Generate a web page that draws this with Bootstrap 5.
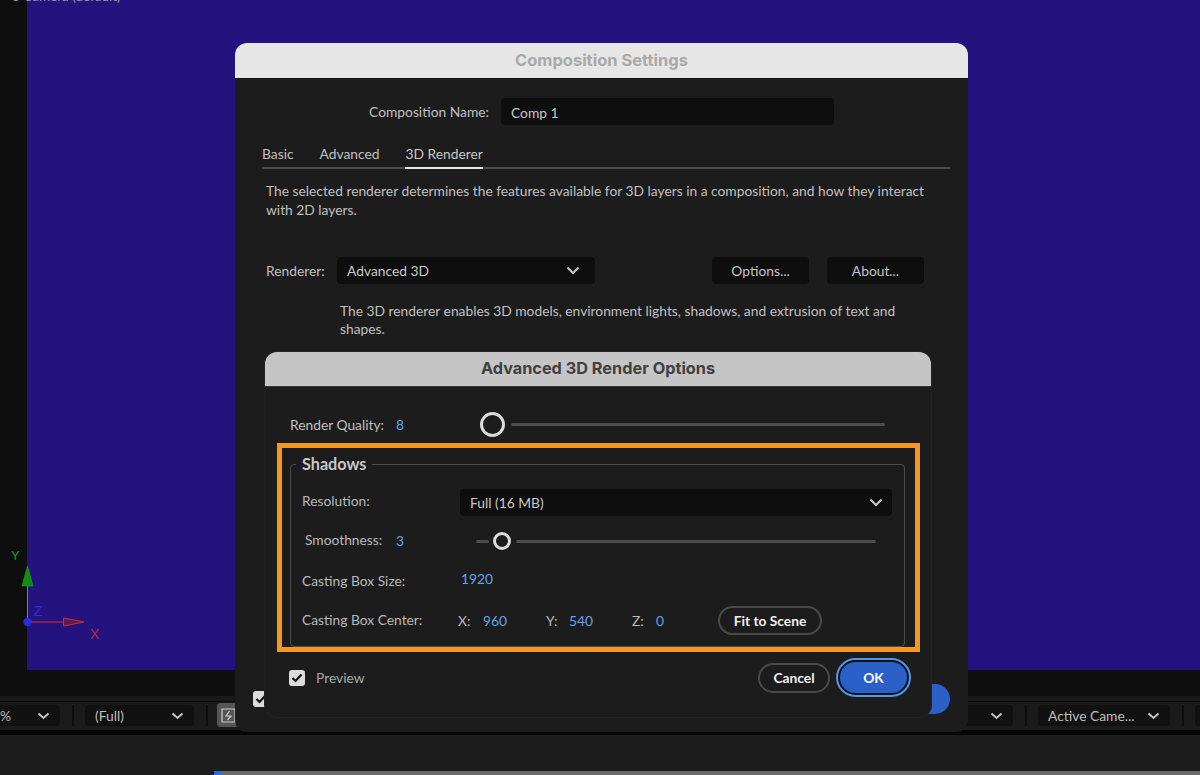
<!DOCTYPE html>
<html lang="en">
<head>
<meta charset="utf-8">
<title>Advanced 3D Render Options</title>
<link href="https://cdn.jsdelivr.net/npm/bootstrap@5.3.0/dist/css/bootstrap.min.css" rel="stylesheet">
<script src="https://cdn.jsdelivr.net/npm/bootstrap@5.3.0/dist/js/bootstrap.bundle.min.js"></script>
<style>
html,body{height:775px;overflow:hidden}
body{background:#0e0e0e;color:#c0c0c0;font-family:"Lato","Noto Sans",sans-serif;font-size:13.8px;line-height:19px;position:relative}
.shell{width:1200px;height:775px}
.viewer{height:670px}
.gutter{width:27px;background:#0e0e0e}
.stage{background:#24137e}
.strip-a{height:26px;background:#0e0e0e}
.strip-b{height:5px;background:#1a1a1a;border-bottom:1px solid #0a0a0a;box-sizing:content-box}
.toolbar{height:28px;background:#1b1b1b;color:#bdbdbd;padding-top:3px}
.strip-c{height:5px;background:#050505}
.panel-low{height:36px;background:#1c1c1c}
.timeline{height:4px;background:#1c1c1c}
.tl-blue{width:7px;margin-left:214px;background:#2a6ae0}
.tl-gray{background:#6a6a6a}
.tb-sel{height:21px;background:#111;border-radius:4px;padding:0 10px;font-size:13.8px}
.tb-pct{width:60px;border-radius:0 4px 4px 0;padding-left:0}
.tb-full{width:109px;margin-left:11px}
.tb-a{width:103px;margin-left:auto}
.tb-b{width:132px;margin-left:11px}
.tb-c{width:5px;margin-left:11px;padding:0;border-radius:4px 0 0 4px}
.tb-div{width:2px;height:21px;background:#0e0e0e;margin-left:12px}
.tb-ico{width:23px;height:24px;background:#555;border-radius:4px;margin-left:9px;margin-top:-2px}
.win{position:absolute;background:#1c1c1c;border-radius:12px;display:flex;flex-direction:column}
.win-comp{left:235px;top:43px;width:733px;height:689px}
.win-adv{left:265px;top:352px;width:666px;height:365px;box-shadow:0 0 0 1px #232323}
.win-title{font-family:"Inter","Liberation Sans",sans-serif;font-weight:700;text-align:center;border-radius:12px 12px 0 0;flex:none}
.win-comp .win-title{height:36px;line-height:34px;background:#e6e6e6;color:#a9a9a9;font-size:16.5px;border-bottom:1px solid #0c0c0c}
.win-adv .win-title{height:35px;line-height:33px;background:#c5c5c5;color:#404040;font-size:16.3px;border-bottom:1px solid #333}
.name-row{height:27px;margin-top:19px}
.name-lab{width:254px;text-align:right;margin-right:12px}
.well{background:#0e0e0e;border-radius:4px;color:#c8c8c8}
.name-in{width:333px;height:27px;padding-left:10px;line-height:29px}
.tabs-row{margin:14px 18px 0 27px;border-bottom:2px solid #4c4c4c;gap:26px;box-sizing:content-box;height:28px;flex-wrap:nowrap}
.tabs-row .nav-link{padding:0;color:#c0c0c0;height:30px;line-height:30px;border-bottom:2px solid transparent}
.tabs-row .nav-link.active{color:#c8c8c8;border-bottom-color:#e8e8e8}
.intro{margin:12px 0 0 31px;width:665px;line-height:19px}
.rend-row{margin:38px 0 0 31px;height:27px}
.rend-lab{width:71px}
.rend-sel{width:258px;height:27px;padding:0 15px 0 10px}
.opt-btn{width:97px;height:27px;padding:0;background:#0e0e0e;border:0;border-radius:4px;color:#c4c4c4;font-size:13.8px;line-height:27px}
.opt-first{margin-left:117px}
.opt-next{margin-left:18px}
.desc{margin:18px 0 0 105px;width:570px;line-height:18px}
.comp-foot{margin-top:auto;padding:0 18px 18px}
.chk{width:16px;height:16px;background:#dcdcdc;border-radius:3px;flex:none}
.ghost-blue{width:70px;height:30px;background:#2a60c8;border-radius:15px;border:0;padding:0}
.quality{margin:27px 0 0 25px;height:20px}
.lab-q{width:106px}
.val{color:#62a3ee}
.val-q{width:84px}
.knob{border:3px solid #dcdcdc;border-radius:50%;flex:none;display:block}
.knob-l{width:25px;height:25px;margin-right:6px}
.knob-s{width:18px;height:18px;margin:0 5px 0 4px}
.track{height:3px;background:#4c4c4c;border-radius:2px;display:block}
.track-q{width:374px}
.track-a{width:13px}
.track-b{width:360px}
.orange{margin:9px 0 0 12px;width:643px;height:209px;border:5px solid #f39821;padding:16px 10px 0 8px}
.field{height:183px;border:1px solid #4c4c4c;border-radius:4px;position:relative;padding:24px 12px 0 11px;color:#b9b9b9}
.legend-txt{position:absolute;left:5px;top:-12px;background:#1c1c1c;padding:0 6px;font-weight:700;font-size:16.2px;color:#c8c8c8;line-height:22px}
.res-row{height:27px}
.lab-r{width:158px;margin-top:-4px}
.lab-w{width:159px}
.lab-c{width:156px;margin-top:-2px}
.res-sel{width:432px;height:27px;padding:0 9px 0 10px}
.smo-row{height:20px;margin-top:15px;padding-left:3px}
.lab-sm{width:91px;margin-top:-3px}
.val-sm{width:80px;margin-top:-1px}
.size-row{margin-top:19px;height:20px}
.size-val{margin-top:-3px}
.center-row{height:30px;margin-top:15px}
.ax-x{width:25px}.v-x{width:63px}.ax-y{width:23px}.v-y{width:63px}.ax-z{width:24px}.v-z{width:62px}
.btn-line{border:2px solid #4a4a4a;background:transparent;color:#f0f0f0;font-weight:700;border-radius:15px;padding:0;font-size:13.8px;line-height:25px}
.btn-fit{width:104px;height:29px}
.adv-foot{margin-top:6px;height:39px;padding:0 20px 0 24px}
.prev-lab{margin-left:11px;color:#a8a8a8}
.btn-cancel{width:72px;height:30px;margin-left:auto}
.ok-ring{width:75px;height:39px;margin-left:6px;border:2px solid #4f97ec;border-radius:20px;padding:2px;background:#111}
.btn-ok{width:100%;height:100%;border:0;border-radius:16px;background:#2a60c8;color:#fff;font-weight:700;font-size:13.8px;padding:0;line-height:29px}
.top-clip{position:absolute;left:12px;top:-12px;font-size:13.5px;color:#9a9a9a;line-height:16px}
.gizmo{position:absolute;left:0;top:540px}
</style>
</head>
<body>
<div class="shell d-flex flex-column">
  <div class="viewer d-flex">
    <div class="gutter"></div>
    <div class="stage flex-grow-1"></div>
  </div>
  <div class="strip-a"></div>
  <div class="strip-b"></div>
  <div class="toolbar d-flex">
    <div class="tb-sel tb-pct d-flex align-items-center justify-content-between"><span>%</span><svg width="13" height="8" viewBox="0 0 13 8"><path d="M1.500 1.500 6.500 6 11.500 1.500" fill="none" stroke="#c4c4c4" stroke-width="2"/></svg></div>
    <div class="tb-div"></div>
    <div class="tb-sel tb-full d-flex align-items-center justify-content-between"><span>(Full)</span><svg width="13" height="8" viewBox="0 0 13 8"><path d="M1.500 1.500 6.500 6 11.500 1.500" fill="none" stroke="#c4c4c4" stroke-width="2"/></svg></div>
    <div class="tb-div"></div>
    <div class="tb-ico d-flex align-items-center justify-content-center"><svg width="15" height="15" viewBox="0 0 15 15"><path d="M1 1H14V14H1Z M8.500 3 5 8H10L6.500 12" fill="none" stroke="#ccc" stroke-width="1.200"/></svg></div>
    <div class="tb-sel tb-a d-flex align-items-center justify-content-end"><svg width="13" height="8" viewBox="0 0 13 8"><path d="M1.500 1.500 6.500 6 11.500 1.500" fill="none" stroke="#c4c4c4" stroke-width="2"/></svg></div>
    <div class="tb-div"></div>
    <div class="tb-sel tb-b d-flex align-items-center justify-content-between"><span>Active Came...</span><svg width="13" height="8" viewBox="0 0 13 8"><path d="M1.500 1.500 6.500 6 11.500 1.500" fill="none" stroke="#c4c4c4" stroke-width="2"/></svg></div>
    <div class="tb-div"></div>
    <div class="tb-sel tb-c"></div>
  </div>
  <div class="strip-c"></div>
  <div class="panel-low"></div>
  <div class="timeline d-flex"><div class="tl-blue"></div><div class="tl-gray flex-grow-1"></div></div>
</div>

<div class="top-clip">3 Camera (default)</div>

<svg class="gizmo" width="115" height="115" viewBox="0 540 115 115">
  <text x="11" y="560" font-family="Liberation Sans,sans-serif" font-size="13" fill="#12a012">Y</text>
  <path d="M27.500 586V620" stroke="#2fb52f" stroke-width="1"/>
  <path d="M27.500 566 33 586H22Z" fill="#0e8f0e" stroke="#18a818" stroke-width=".6"/>
  <text x="33.500" y="616" font-family="Liberation Sans,sans-serif" font-size="15" fill="#2f2fd0">Z</text>
  <path d="M30 622H64" stroke="#e02a2a" stroke-width="1.200"/>
  <path d="M63.500 618V626L84 622Z" fill="#5a1a50" stroke="#d62a2a" stroke-width="1"/>
  <circle cx="27.500" cy="622" r="4.200" fill="#2a2ae0"/>
  <text x="90" y="639" font-family="Liberation Sans,sans-serif" font-size="14" fill="#b82a40">X</text>
</svg>

<section class="win win-comp">
  <div class="win-title">Composition Settings</div>
  <div class="name-row d-flex align-items-center">
    <div class="name-lab">Composition Name:</div>
    <div class="well name-in">Comp 1</div>
  </div>
  <nav class="nav tabs-row">
    <a class="nav-link" href="#">Basic</a>
    <a class="nav-link" href="#">Advanced</a>
    <a class="nav-link active" href="#">3D Renderer</a>
  </nav>
  <p class="intro mb-0">The selected renderer determines the features available for 3D layers in a composition, and how they interact with 2D layers.</p>
  <div class="rend-row d-flex align-items-center">
    <div class="rend-lab">Renderer:</div>
    <div class="well rend-sel d-flex align-items-center justify-content-between"><span>Advanced 3D</span><svg width="14" height="9" viewBox="0 0 14 9"><path d="M1.500 1.500 7 7 12.500 1.500" fill="none" stroke="#c8c8c8" stroke-width="2"/></svg></div>
    <button class="btn opt-btn opt-first">Options...</button>
    <button class="btn opt-btn opt-next">About...</button>
  </div>
  <p class="desc mb-0">The 3D renderer enables 3D models, environment lights, shadows, and extrusion of text and shapes.</p>
  <div class="comp-foot d-flex align-items-center justify-content-between">
    <span class="chk d-flex align-items-center justify-content-center"><svg width="12" height="10" viewBox="0 0 12 10"><path d="M1.500 5 4.500 8 10.500 1.500" fill="none" stroke="#111" stroke-width="2.200"/></svg></span>
    <button class="btn ghost-blue" aria-label="OK"></button>
  </div>
</section>

<section class="win win-adv">
  <div class="win-title">Advanced 3D Render Options</div>
  <div class="quality d-flex align-items-center">
    <div class="lab-q">Render Quality:</div>
    <div class="val val-q">8</div>
    <span class="knob knob-l"></span>
    <span class="track track-q"></span>
  </div>
  <div class="orange">
    <div class="field">
      <div class="legend-txt">Shadows</div>
      <div class="res-row d-flex align-items-center">
        <div class="lab-r">Resolution:</div>
        <div class="well res-sel d-flex align-items-center justify-content-between"><span>Full (16 MB)</span><svg width="14" height="9" viewBox="0 0 14 9"><path d="M1.500 1.500 7 7 12.500 1.500" fill="none" stroke="#c8c8c8" stroke-width="2"/></svg></div>
      </div>
      <div class="smo-row d-flex align-items-center">
        <div class="lab-sm">Smoothness:</div>
        <div class="val val-sm">3</div>
        <span class="track track-a"></span>
        <span class="knob knob-s"></span>
        <span class="track track-b"></span>
      </div>
      <div class="size-row d-flex align-items-center">
        <div class="lab-w">Casting Box Size:</div>
        <div class="val size-val">1920</div>
      </div>
      <div class="center-row d-flex align-items-center">
        <div class="lab-c">Casting Box Center:</div>
        <div class="ax-x">X:</div><div class="val v-x">960</div>
        <div class="ax-y">Y:</div><div class="val v-y">540</div>
        <div class="ax-z">Z:</div><div class="val v-z">0</div>
        <button class="btn btn-line btn-fit">Fit to Scene</button>
      </div>
    </div>
  </div>
  <div class="adv-foot d-flex align-items-center">
    <span class="chk d-flex align-items-center justify-content-center"><svg width="12" height="10" viewBox="0 0 12 10"><path d="M1.500 5 4.500 8 10.500 1.500" fill="none" stroke="#111" stroke-width="2.200"/></svg></span>
    <span class="prev-lab">Preview</span>
    <button class="btn btn-line btn-cancel">Cancel</button>
    <div class="ok-ring"><button class="btn btn-ok">OK</button></div>
  </div>
</section>
</body>
</html>
